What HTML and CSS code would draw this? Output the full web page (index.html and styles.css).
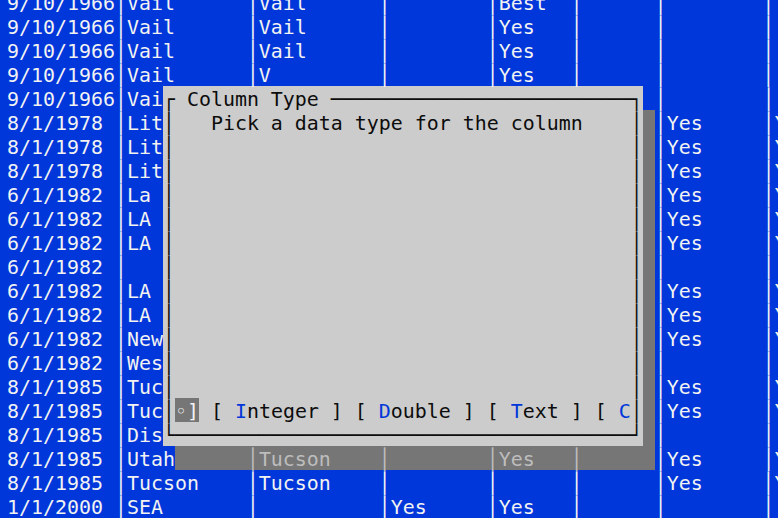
FILE: index.html
```html
<!DOCTYPE html>
<html>
<head>
<meta charset="utf-8">
<link rel="stylesheet" href="styles.css">
</head>
<body>
<div class="term">
<div class="row">9/10/1966│Vail      │Vail      │        │Best  │      │        │</div>
<div class="row">9/10/1966│Vail      │Vail      │        │Yes   │      │        │</div>
<div class="row">9/10/1966│Vail      │Vail      │        │Yes   │      │        │</div>
<div class="row">9/10/1966│Vail      │V         │        │Yes   │      │        │</div>
<div class="row">9/10/1966│Vai<span class="dlg">┌ Column Type ─────────────────────────┐</span> │        │</div>
<div class="row">8/1/1978 │Lit<span class="dlg">│   Pick a data type for the column    │</span><span class="sh"> </span>│Yes     │Yes</div>
<div class="row">8/1/1978 │Lit<span class="dlg">│                                      │</span><span class="sh"> </span>│Yes     │Yes</div>
<div class="row">8/1/1978 │Lit<span class="dlg">│                                      │</span><span class="sh"> </span>│Yes     │Yes</div>
<div class="row">6/1/1982 │La <span class="dlg">│                                      │</span><span class="sh"> </span>│Yes     │Yes</div>
<div class="row">6/1/1982 │LA <span class="dlg">│                                      │</span><span class="sh"> </span>│Yes     │Yes</div>
<div class="row">6/1/1982 │LA <span class="dlg">│                                      │</span><span class="sh"> </span>│Yes     │Yes</div>
<div class="row">6/1/1982 │   <span class="dlg">│                                      │</span><span class="sh"> </span>│        │</div>
<div class="row">6/1/1982 │LA <span class="dlg">│                                      │</span><span class="sh"> </span>│Yes     │Yes</div>
<div class="row">6/1/1982 │LA <span class="dlg">│                                      │</span><span class="sh"> </span>│Yes     │Yes</div>
<div class="row">6/1/1982 │New<span class="dlg">│                                      │</span><span class="sh"> </span>│Yes     │Yes</div>
<div class="row">6/1/1982 │Wes<span class="dlg">│                                      │</span><span class="sh"> </span>│        │</div>
<div class="row">8/1/1985 │Tuc<span class="dlg">│                                      │</span><span class="sh"> </span>│Yes     │Yes</div>
<div class="row">8/1/1985 │Tuc<span class="dlg">│</span><span class="foc">◦]</span><span class="dlg"> [ <span class="hk">I</span>nteger ] [ <span class="hk">D</span>ouble ] [ <span class="hk">T</span>ext ] [ <span class="hk">C</span>│</span><span class="sh"> </span>│Yes     │Yes</div>
<div class="row">8/1/1985 │Dis<span class="dlg">└──────────────────────────────────────┘</span><span class="sh"> </span>│        │</div>
<div class="row">8/1/1985 │Utah<span class="sh">      │Tucson    │        │Yes   │      </span>│Yes     │Yes</div>
<div class="row">8/1/1985 │Tucson    │Tucson    │        │      │      │Yes     │Yes</div>
<div class="row">1/1/2000 │SEA       │          │Yes     │Yes   │      │        │</div>
</div>
</body>
</html>
```
FILE: styles.css
```css
html, body {
  margin: 0;
  padding: 0;
  height: 100%;
}
body {
  background: #0037da;
  overflow: hidden;
}
.term {
  margin-top: -10px;
  padding-left: 7px;
  font-family: "DejaVu Sans Mono", monospace;
  font-size: 19.93px;
  line-height: 24px;
  color: #f2f2f2;
}
.row {
  box-sizing: border-box;
  height: 24px;
  padding-top: 2px;
  white-space: pre;
}
.dlg,
.foc,
.sh {
  position: relative;
  display: inline-block;
  height: 22px;
  padding-top: 2px;
  margin-top: -2px;
  vertical-align: top;
}
.dlg::before,
.foc::before,
.sh::before {
  content: "";
  position: absolute;
  inset: 0;
  z-index: -1;
}
.dlg {
  color: #0c0c0c;
}
.dlg::before {
  background: #cccccc;
}
.dlg .hk {
  position: static;
  display: inline;
  color: #0037da;
}
.foc {
  color: #f2f2f2;
}
.foc::before,
.sh::before {
  background: #767676;
}
.sh {
  color: #bdbdbd;
}
```
